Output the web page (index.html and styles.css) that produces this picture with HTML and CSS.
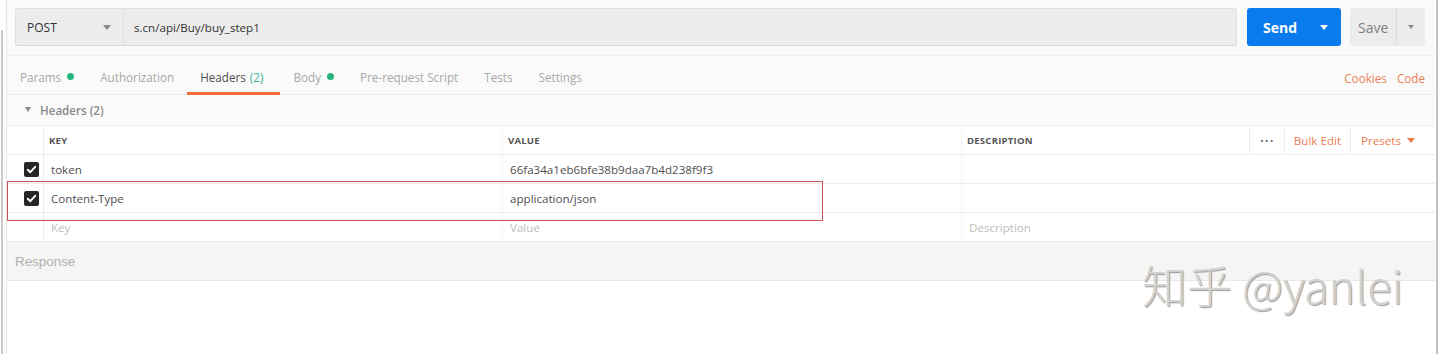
FILE: index.html
```html
<!DOCTYPE html>
<html lang="zh-CN">
<head>
  <meta charset="UTF-8">
  <title>Postman - buy_step1</title>
  <meta name="viewport" content="width=device-width, initial-scale=1">
  <link rel="stylesheet" href="styles.css">
</head>
<body>
  <div class="page">
    <div class="gutter"><div class="gutter-line"></div></div>

    <div class="main">
      <div class="request-bar">
        <div class="url-box">
          <div class="method">
            <span>POST</span>
            <span class="caret"></span>
          </div>
          <div class="url">s.cn/api/Buy/buy_step1</div>
        </div>
        <button class="send">
          <span class="send-label">Send</span>
          <span class="caret white"></span>
        </button>
        <button class="save">
          <span class="save-label">Save</span>
          <span class="save-drop"><span class="caret"></span></span>
        </button>
      </div>

      <div class="tabs">
        <div class="tab">Params <span class="dot"></span></div>
        <div class="tab">Authorization</div>
        <div class="tab active">Headers <span class="count">(2)</span></div>
        <div class="tab">Body <span class="dot"></span></div>
        <div class="tab">Pre-request Script</div>
        <div class="tab">Tests</div>
        <div class="tab">Settings</div>
        <div class="tab-links">
          <span>Cookies</span>
          <span>Code</span>
        </div>
      </div>

      <div class="section">
        <div class="section-title"><span class="caret dark"></span>Headers (2)</div>

        <div class="kv-table">
          <div class="kv-row head">
            <div class="cell check"></div>
            <div class="cell">KEY</div>
            <div class="cell">VALUE</div>
            <div class="cell desc-head">
              <span>DESCRIPTION</span>
              <div class="head-actions">
                <span class="more">&bull;&bull;&bull;</span>
                <span class="link">Bulk Edit</span>
                <span class="link">Presets <span class="caret orange"></span></span>
              </div>
            </div>
          </div>
          <div class="kv-row">
            <div class="cell check">
              <span class="box"><svg width="11" height="11" viewBox="0 0 11 11"><path d="M1.8 5.8 L4.3 8.2 L9.2 2.8" fill="none" stroke="#fff" stroke-width="2" stroke-linecap="round" stroke-linejoin="round"/></svg></span>
            </div>
            <div class="cell">token</div>
            <div class="cell">66fa34a1eb6bfe38b9daa7b4d238f9f3</div>
            <div class="cell"></div>
          </div>
          <div class="kv-row">
            <div class="cell check">
              <span class="box"><svg width="11" height="11" viewBox="0 0 11 11"><path d="M1.8 5.8 L4.3 8.2 L9.2 2.8" fill="none" stroke="#fff" stroke-width="2" stroke-linecap="round" stroke-linejoin="round"/></svg></span>
            </div>
            <div class="cell">Content-Type</div>
            <div class="cell">application/json</div>
            <div class="cell"></div>
          </div>
          <div class="kv-row empty">
            <div class="cell check"></div>
            <div class="cell">Key</div>
            <div class="cell">Value</div>
            <div class="cell">Description</div>
          </div>
        </div>
      </div>

      <div class="response">Response</div>
      <div class="response-body"></div>

      <div class="highlight"></div>
      <div class="watermark">知乎 @yanlei</div>
    </div>

    <div class="scrollbar"><div class="scrollbar-line"></div></div>
  </div>
</body>
</html>
```

FILE: styles.css
```css
body {
  margin: 0;
  background: #fff;
  font-family: "Open Sans", "Noto Sans", sans-serif;
  font-size: 12px;
  color: #505050;
}

.page {
  display: flex;
  height: 354px;
  overflow: hidden;
}

.gutter {
  width: 6px;
}

.gutter-line {
  margin: 30px 0 0 1px;
  width: 2px;
  height: 324px;
  background: #c9c9c9;
}

.scrollbar {
  width: 5px;
}

.scrollbar-line {
  margin-left: 1px;
  width: 2px;
  height: 100%;
  background: #c2c2c2;
}

.main {
  flex: 1;
  position: relative;
  border-left: 1px solid #e6e6e6;
  background: #fafafa;
}

/* request bar */
.request-bar {
  display: flex;
  padding: 8px 10px 0 8px;
  height: 38px;
}

.url-box {
  flex: 1;
  display: flex;
  background: #ececec;
  border: 1px solid #e0e0e0;
  border-bottom-color: #d6d6d6;
  border-radius: 2px;
}

.method {
  width: 108px;
  display: flex;
  align-items: center;
  justify-content: space-between;
  padding: 0 12px 0 11px;
  box-sizing: border-box;
  border-right: 1px solid #dedede;
  color: #333;
  font-size: 12px;
}

.url {
  display: flex;
  align-items: center;
  padding-left: 10px;
  color: #333;
  font-size: 11.6px;
}

.caret {
  display: inline-block;
  width: 0;
  height: 0;
  border-left: 4px solid transparent;
  border-right: 4px solid transparent;
  border-top: 5px solid #8a8a8a;
}

.caret.white { border-top-color: #fff; }
.caret.dark { border-top-color: #8a8a8a; margin: 0 9px 1px 18px; border-left-width: 3.5px; border-right-width: 3.5px; }
.caret.orange { border-top-color: #ef7a4c; margin-left: 6px; vertical-align: 1px; }

button {
  font-family: inherit;
  border: none;
  cursor: pointer;
  border-radius: 3px;
  padding: 0;
}

.send {
  margin-left: 10px;
  width: 94px;
  background: #097bed;
  color: #fff;
  display: flex;
  align-items: center;
  font-size: 14px;
  font-weight: bold;
}

.send-label {
  flex: 1;
  text-align: left;
  padding-left: 16px;
}

.send .caret {
  margin-right: 13px;
}

.save {
  margin-left: 9px;
  width: 75px;
  background: #ececec;
  color: #808080;
  display: flex;
  align-items: stretch;
  font-size: 14px;
}

.save-label {
  flex: 1;
  display: flex;
  align-items: center;
  padding-left: 8px;
}

.save-drop {
  width: 28px;
  border-left: 1px solid #dcdcdc;
  display: flex;
  align-items: center;
  justify-content: center;
}

.save-drop .caret {
  border-left-width: 3px;
  border-right-width: 3px;
  border-top-width: 4px;
}

/* tabs */
.tabs {
  display: flex;
  margin-top: 9px;
  height: 38px;
  border-top: 1px solid #efefef;
  border-bottom: 1px solid #ececec;
  font-size: 11.7px;
}

.tab {
  display: flex;
  align-items: center;
  padding: 5px 13px 0;
  color: #a8a8a8;
  border-bottom: 3px solid transparent;
  margin-bottom: -1px;
}

.tab.active {
  color: #505050;
  border-bottom-color: #f26b3a;
  padding-right: 17px;
}

.count {
  color: #3ab596;
  margin-left: 4px;
}

.dot {
  width: 7px;
  height: 7px;
  border-radius: 50%;
  background: #26b47f;
  margin-left: 6px;
}

.tab-links {
  margin-left: auto;
  display: flex;
  align-items: center;
  gap: 10px;
  padding: 5px 10px 0 0;
  color: #ea7f55;
}

/* headers section */
.section {
  background: #fff;
}

.section-title {
  height: 30px;
  display: flex;
  align-items: center;
  font-weight: 600;
  font-size: 11.6px;
  color: #8a8a8a;
  background: #fafafa;
}

.kv-table {
  border-top: 1px solid #eeeeee;
}

.kv-row {
  display: grid;
  grid-template-columns: 36px 459px 459px 1fr;
  height: 29px;
  border-bottom: 1px solid #ececec;
  box-sizing: border-box;
  font-size: 11.6px;
}

.kv-row.head {
  height: 29px;
  font-size: 9.6px;
  font-weight: bold;
  color: #555;
  letter-spacing: 0.2px;
}

.cell {
  display: flex;
  align-items: center;
  padding-left: 7px;
  border-left: 1px solid #ececec;
}

.kv-row.head .cell {
  padding-left: 5px;
}

.cell:first-child {
  border-left: none;
}

.kv-row .cell:nth-child(3),
.kv-row .cell:nth-child(4) {
  border-left-color: #f4f4f4;
}

.kv-row.empty {
  color: #bcbcbc;
}

.kv-row .check {
  justify-content: flex-end;
  padding: 0 4px 0 0;
}

.box {
  width: 15px;
  height: 15px;
  border-radius: 2px;
  background: #262626;
  display: flex;
  align-items: center;
  justify-content: center;
}

.desc-head {
  justify-content: space-between;
  padding-right: 0;
}

.head-actions {
  display: flex;
  align-items: center;
  height: 100%;
  font-size: 11.6px;
  font-weight: normal;
  letter-spacing: 0;
}

.head-actions span.more,
.head-actions span.link {
  display: flex;
  align-items: center;
  height: 25px;
  border-left: 1px solid #ececec;
}

.more {
  color: #666;
  font-size: 9px;
  letter-spacing: 1.5px;
  padding: 0 9px 0 10px;
}

.link {
  color: #ea7f55;
  padding: 0 9px;
}

.link:last-child {
  padding: 0 20px 0 10px;
}

/* response */
.response {
  height: 38px;
  display: flex;
  align-items: center;
  padding-left: 8px;
  font-family: "Liberation Sans", Arial, sans-serif;
  font-size: 13.4px;
  color: #b0b0b0;
  background: #f5f5f5;
  border-bottom: 1px solid #e8e8e8;
}

.response-body {
  background: #fff;
  height: 80px;
}

/* overlays */
.highlight {
  position: absolute;
  left: 0;
  top: 181px;
  width: 814px;
  height: 38px;
  border: 1px solid #c9555a;
}

.watermark {
  position: absolute;
  left: 1135px;
  top: 262px;
  font-family: "Noto Sans CJK SC", "Noto Sans", sans-serif;
  font-weight: 300;
  font-size: 45px;
  line-height: 1;
  color: #d2d2d2;
  text-shadow: 1px 1px 1px #9a9a9a;
  white-space: nowrap;
}
```
